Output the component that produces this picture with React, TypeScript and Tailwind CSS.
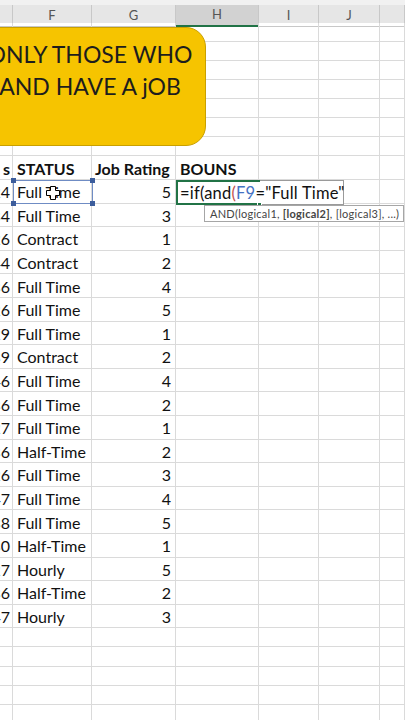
import React from 'react'

const cols = 'grid grid-cols-[13px_79px_84px_83px_60px_61px_1fr]'

const rows: [string, string, number][] = [
  ['24', 'Full Time', 5],
  ['34', 'Full Time', 3],
  ['26', 'Contract', 1],
  ['44', 'Contract', 2],
  ['36', 'Full Time', 4],
  ['26', 'Full Time', 5],
  ['29', 'Full Time', 1],
  ['39', 'Contract', 2],
  ['46', 'Full Time', 4],
  ['36', 'Full Time', 2],
  ['27', 'Full Time', 1],
  ['36', 'Half-Time', 2],
  ['26', 'Full Time', 3],
  ['47', 'Full Time', 4],
  ['38', 'Full Time', 5],
  ['30', 'Half-Time', 1],
  ['27', 'Hourly', 5],
  ['36', 'Half-Time', 2],
  ['47', 'Hourly', 3],
]

const cell = 'border-r border-b border-[#dadada] overflow-hidden whitespace-nowrap flex items-center pt-[2px]'

function EmptyRow({ h }: { h: string }) {
  return (
    <div className={`${cols} ${h}`}>
      {[0, 1, 2, 3, 4, 5, 6].map((i) => (
        <div key={i} className={cell} />
      ))}
    </div>
  )
}

function CrossCursor() {
  return (
    <svg width="16" height="16" viewBox="0 0 16 16" className="absolute left-[45px] top-[185px]">
      <path
        d="M5.5 1.5h5v4h4v5h-4v4h-5v-4h-4v-5h4z"
        fill="#fff"
        stroke="#000"
        strokeWidth="1"
      />
    </svg>
  )
}

export default function App() {
  const letters = ['', 'F', 'G', 'H', 'I', 'J', '']
  return (
    <div className="relative w-[405px] h-[720px] overflow-hidden bg-white font-['Lato','Noto_Sans',sans-serif] text-[16px] text-[#111]">
      {/* strip above column headers */}
      <div className="h-[5px] bg-[#f1f1f1]" />
      {/* column letters */}
      <div className={`${cols} h-[18px] bg-[#e6e6e6] text-[13px] text-[#555]`}>
        {letters.map((l, i) => (
          <div
            key={i}
            className={`flex items-center justify-center border-r border-[#c8c8c8] ${
              l === 'H' ? 'bg-[#d2d2d2] border-b-2 border-b-[#217346]' : 'border-b border-b-[#c8c8c8]'
            }`}
          >
            {l}
          </div>
        ))}
      </div>

      {/* rows hidden behind the callout */}
      {[0, 1, 2, 3, 4, 5, 6].map((i) => (
        <EmptyRow key={i} h="h-[19px]" />
      ))}

      {/* header row */}
      <div className={`${cols} h-[24px] font-bold`}>
        <div className={`${cell} justify-end pr-[2px]`}>s</div>
        <div className={`${cell} pl-[4px]`}>STATUS</div>
        <div className={`${cell} pl-[3px]`}>Job Rating</div>
        <div className={`${cell} pl-[4px]`}>BOUNS</div>
        <div className={cell} />
        <div className={cell} />
        <div className={cell} />
      </div>

      {rows.map(([e, status, rating], i) => (
        <div key={i} className={`${cols} h-[23.6px]`}>
          <div className={`${cell} justify-end pr-[2px]`}>{e}</div>
          <div className={`${cell} pl-[4px]`}>{status}</div>
          <div className={`${cell} justify-end pr-[4px]`}>{rating}</div>
          <div className={cell} />
          <div className={cell} />
          <div className={cell} />
          <div className={cell} />
        </div>
      ))}

      {[0, 1, 2, 3, 4].map((i) => (
        <EmptyRow key={i} h="h-[19.2px]" />
      ))}

      {/* callout shape */}
      <div className="absolute left-[-26px] top-[27px] w-[232px] h-[119px] rounded-[20px] bg-[#f6c400] border-[1.5px] border-[#c9a000] pt-[10px] text-center text-[23px] leading-[32px] text-[#1d1d1d]">
        <div>ONLY THOSE WHO</div>
        <div>AND HAVE A jOB</div>
      </div>

      {/* F9 reference highlight */}
      <div className="absolute left-[13px] top-[180px] w-[80px] h-[24px] border-[1.5px] border-[#6f8cc4]">
        <span className="absolute left-[-3px] top-[-3px] w-[5px] h-[5px] bg-[#3c5d9c]" />
        <span className="absolute right-[-3px] top-[-3px] w-[5px] h-[5px] bg-[#3c5d9c]" />
        <span className="absolute left-[-3px] bottom-[-3px] w-[5px] h-[5px] bg-[#3c5d9c]" />
        <span className="absolute right-[-3px] bottom-[-3px] w-[5px] h-[5px] bg-[#3c5d9c]" />
      </div>
      <CrossCursor />

      {/* in-cell editor */}
      <div className="absolute left-[176px] top-[180px] w-[168px] h-[25px] bg-white border border-[#9a9a9a] flex items-center pl-[3px] pt-[2px] whitespace-nowrap text-[16.5px] tracking-[0.2px]">
        <span>=if(and</span>
        <span className="text-[#c0504d]">(</span>
        <span className="text-[#4472c4]">F9</span>
        <span>="Full Time"</span>
        <span className="ml-[1px] w-[1px] h-[19px] bg-black" />
      </div>
      <div className="absolute left-[176px] top-[180px] w-[84px] h-[25px] border-2 border-[#217346] border-r-0" />
      <span className="absolute left-[257px] top-[202px] w-[5px] h-[5px] bg-[#217346] border border-white" />

      {/* function tooltip */}
      <div className="absolute left-[204px] top-[205px] w-[200px] h-[17px] bg-white border border-[#a6a6a6] pl-[5px] text-[11px] tracking-[0.25px] leading-[15px] text-[#444] whitespace-nowrap overflow-hidden">
        AND(logical1, <b>[logical2]</b>, [logical3], ...)
      </div>
    </div>
  )
}
